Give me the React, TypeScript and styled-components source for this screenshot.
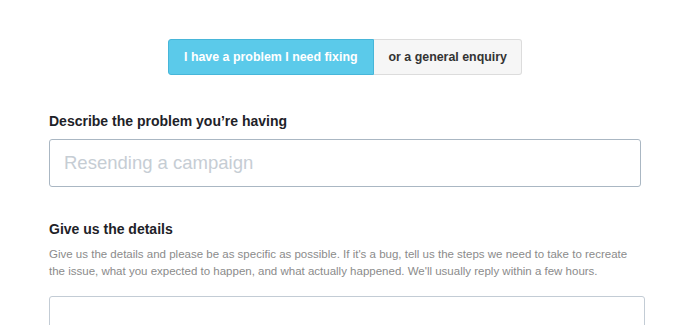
import { useState } from "react";
import styled, { createGlobalStyle } from "styled-components";

const GlobalStyle = createGlobalStyle`
  body {
    margin: 0;
    background: #ffffff;
    font-family: "Liberation Sans", Arial, sans-serif;
  }
`;

const Page = styled.div`
  width: 592px;
  margin: 0 auto;
  padding-top: 39px;
`;

const ToggleRow = styled.div`
  display: flex;
  justify-content: center;
`;

const ToggleButton = styled.button<{ $active?: boolean }>`
  height: 36px;
  padding: 0 ${(p) => (p.$active ? 15.5 : 14.5)}px;
  font-family: inherit;
  font-size: 12.4px;
  font-weight: bold;
  cursor: pointer;
  border: 1px solid ${(p) => (p.$active ? "#47b6d9" : "#dcdcdc")};
  background: ${(p) => (p.$active ? "#5bcaea" : "#f6f6f6")};
  color: ${(p) => (p.$active ? "#ffffff" : "#333333")};
  border-radius: ${(p) => (p.$active ? "3px 0 0 3px" : "0 3px 3px 0")};
  ${(p) => (!p.$active ? "border-left: none;" : "")}
`;

const Field = styled.div<{ $gap?: number }>`
  margin-top: ${(p) => p.$gap ?? 0}px;
`;

const Label = styled.label`
  display: block;
  font-size: 14px;
  font-weight: bold;
  color: #1e2228;
  line-height: 18px;
`;

const Help = styled.p`
  margin: 8px 0 0;
  font-size: 11.5px;
  line-height: 17px;
  color: #8b8b8b;
`;

const TextInput = styled.input`
  display: block;
  box-sizing: border-box;
  width: 100%;
  height: 48px;
  margin-top: 9px;
  padding: 0 14px;
  border: 1px solid #aab7c3;
  border-radius: 3px;
  font-family: inherit;
  font-size: 18.5px;
  color: #333;
  outline: none;
  &::placeholder {
    color: #c6cdd4;
  }
`;

const TextArea = styled.textarea`
  display: block;
  box-sizing: border-box;
  width: calc(100% + 4px);
  height: 120px;
  margin-top: 16px;
  border: 1px solid #c3ccd5;
  border-radius: 3px;
  resize: none;
  outline: none;
`;

export default function App() {
  const [mode, setMode] = useState<"problem" | "general">("problem");
  return (
    <>
      <GlobalStyle />
      <Page>
        <ToggleRow>
          <ToggleButton $active={mode === "problem"} onClick={() => setMode("problem")}>
            I have a problem I need fixing
          </ToggleButton>
          <ToggleButton $active={mode === "general"} onClick={() => setMode("general")}>
            or a general enquiry
          </ToggleButton>
        </ToggleRow>
        <Field $gap={37}>
          <Label>Describe the problem you’re having</Label>
          <TextInput placeholder="Resending a campaign" />
        </Field>
        <Field $gap={33}>
          <Label>Give us the details</Label>
          <Help>
            Give us the details and please be as specific as possible. If it's a bug, tell us the steps we need to take to recreate
            the issue, what you expected to happen, and what actually happened. We'll usually reply within a few hours.
          </Help>
          <TextArea />
        </Field>
      </Page>
    </>
  );
}
